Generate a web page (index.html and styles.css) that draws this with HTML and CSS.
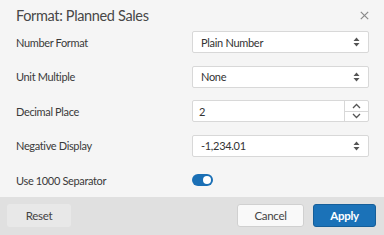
FILE: index.html
```html
<!DOCTYPE html>
<html lang="en">
<head>
    <meta charset="UTF-8">
    <meta name="viewport" content="width=device-width, initial-scale=1.0">
    <title>Format: Planned Sales</title>
    <link rel="stylesheet" href="styles.css">
</head>
<body>
    <div class="dialog">
        <div class="dialog-header">
            <h1>Format: Planned Sales</h1>
            <svg class="close" width="9" height="9" viewBox="0 0 9 9"><path d="M0.8 0.8 L8.2 8.2 M8.2 0.8 L0.8 8.2" stroke="#8a8a8a" stroke-width="1.2"/></svg>
        </div>

        <div class="form">
            <div class="row">
                <label>Number Format</label>
                <div class="select">
                    <span>Plain Number</span>
                    <svg class="sort" width="7" height="10" viewBox="0 0 7 10"><path d="M3.5 0.5 L6.5 4 H0.5 Z M3.5 9.5 L6.5 6 H0.5 Z" fill="#555"/></svg>
                </div>
            </div>
            <div class="row">
                <label>Unit Multiple</label>
                <div class="select">
                    <span>None</span>
                    <svg class="sort" width="7" height="10" viewBox="0 0 7 10"><path d="M3.5 0.5 L6.5 4 H0.5 Z M3.5 9.5 L6.5 6 H0.5 Z" fill="#555"/></svg>
                </div>
            </div>
            <div class="row">
                <label>Decimal Place</label>
                <div class="number">
                    <span class="value">2</span>
                    <div class="spinner">
                        <div class="spin"><svg width="9" height="6" viewBox="0 0 9 6"><path d="M1 5 L4.5 1.5 L8 5" fill="none" stroke="#555" stroke-width="1.3"/></svg></div>
                        <div class="spin"><svg width="9" height="6" viewBox="0 0 9 6"><path d="M1 1 L4.5 4.5 L8 1" fill="none" stroke="#555" stroke-width="1.3"/></svg></div>
                    </div>
                </div>
            </div>
            <div class="row">
                <label>Negative Display</label>
                <div class="select">
                    <span>-1,234.01</span>
                    <svg class="sort" width="7" height="10" viewBox="0 0 7 10"><path d="M3.5 0.5 L6.5 4 H0.5 Z M3.5 9.5 L6.5 6 H0.5 Z" fill="#555"/></svg>
                </div>
            </div>
            <div class="row">
                <label>Use 1000 Separator</label>
                <div class="toggle on"><span class="knob"></span></div>
            </div>
        </div>

        <div class="dialog-footer">
            <button class="btn btn-reset">Reset</button>
            <div class="actions">
                <button class="btn btn-cancel">Cancel</button>
                <button class="btn btn-apply">Apply</button>
            </div>
        </div>
    </div>
</body>
</html>
```

FILE: styles.css
```css
* {
    box-sizing: border-box;
}
body {
    margin: 0;
    font-family: Lato, "Open Sans", sans-serif;
    color: #333;
}
.dialog {
    width: 384px;
    height: 235px;
    background-color: #f5f5f5;
    display: flex;
    flex-direction: column;
}
.dialog-header {
    display: flex;
    justify-content: space-between;
    align-items: center;
    height: 28px;
    padding: 2px 15px 0 16px;
}
.dialog-header h1 {
    margin: 0;
    font-size: 14.5px;
    font-weight: normal;
    letter-spacing: -0.35px;
    color: #474747;
}
.form {
    display: flex;
    flex-direction: column;
    gap: 12.5px;
    padding: 3px 15px 0 16px;
    flex: 1;
}
.row {
    display: grid;
    grid-template-columns: 176px 177px;
    align-items: center;
    height: 22px;
}
.row label {
    font-size: 11px;
    letter-spacing: -0.35px;
    color: #3a3a3a;
}
.select,
.number {
    height: 22px;
    background-color: #fff;
    border: 1px solid #d8d8d8;
    border-radius: 2px;
    display: flex;
    align-items: center;
    font-size: 11px;
    letter-spacing: -0.3px;
}
.select {
    justify-content: space-between;
    padding: 0 8px 0 8px;
}
.number {
    padding-left: 6px;
}
.number .value {
    flex: 1;
}
.spinner {
    width: 24px;
    height: 100%;
    border-left: 1px solid #d8d8d8;
    display: flex;
    flex-direction: column;
}
.spin {
    flex: 1;
    display: flex;
    align-items: center;
    justify-content: center;
}
.spin + .spin {
    border-top: 1px solid #d8d8d8;
}
.toggle {
    width: 21px;
    height: 12px;
    border-radius: 6px;
    background-color: #1a6fb5;
    position: relative;
}
.knob {
    position: absolute;
    top: 2px;
    right: 2px;
    width: 8px;
    height: 8px;
    border-radius: 50%;
    background-color: #fff;
}
.dialog-footer {
    height: 38px;
    background-color: #e0e0e0;
    display: flex;
    justify-content: space-between;
    align-items: flex-start;
    padding: 7px 8px 0 7px;
}
.actions {
    display: flex;
    gap: 9px;
}
.btn {
    height: 23px;
    font-family: Lato, "Open Sans", sans-serif;
    font-size: 11.5px;
    letter-spacing: -0.3px;
    border-radius: 3px;
    border: none;
    padding: 0;
    cursor: pointer;
}
.btn-reset {
    width: 64px;
    background-color: #e8e8e8;
    color: #444;
}
.btn-cancel {
    width: 67px;
    background-color: #f9f9f9;
    border: 1px solid #d0d0d0;
    color: #444;
}
.btn-apply {
    width: 63px;
    background-color: #1b72b8;
    border: 1px solid #155e99;
    color: #fff;
    font-weight: bold;
}
```
